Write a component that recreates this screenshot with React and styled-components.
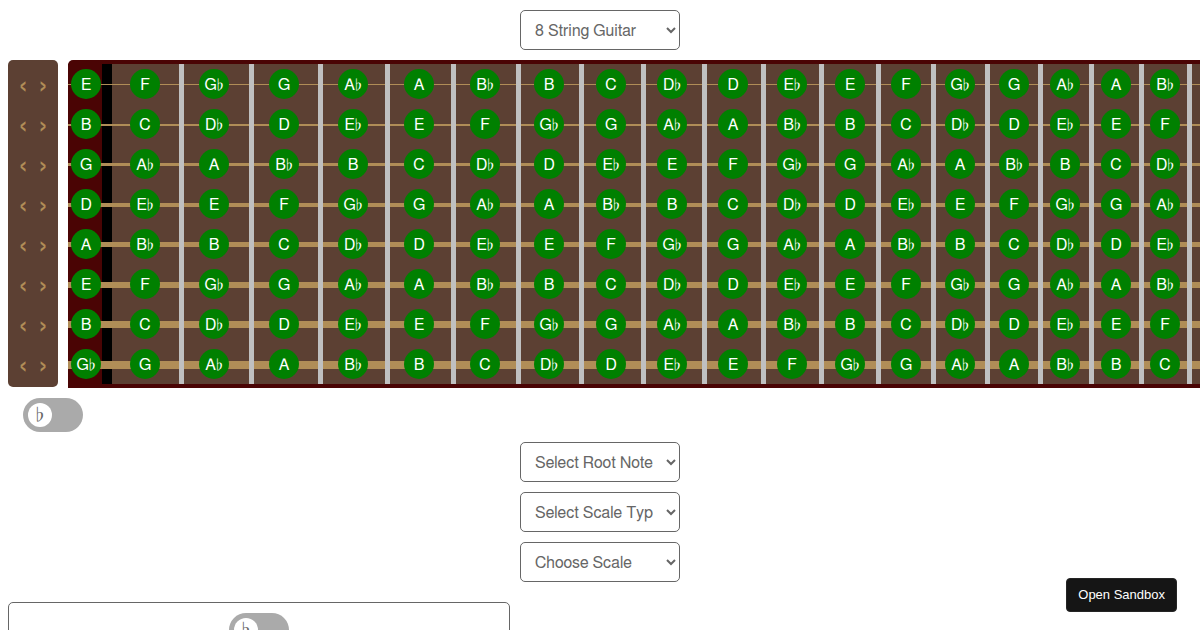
import React, { useState } from 'react';
import styled, { createGlobalStyle } from 'styled-components';

const GlobalStyle = createGlobalStyle`
  body {
    margin: 0;
    background: white;
    font-family: FreeSans, 'Liberation Sans', Arial, sans-serif;
    font-size: 16px;
  }
  * {
    box-sizing: border-box;
  }
`;

const NOTES = ['A', 'B♭', 'B', 'C', 'D♭', 'D', 'E♭', 'E', 'F', 'G♭', 'G', 'A♭'];
const SHARPS = ['A', 'A♯', 'B', 'C', 'C♯', 'D', 'D♯', 'E', 'F', 'F♯', 'G', 'G♯'];

const TUNING = ['E', 'B', 'G', 'D', 'A', 'E', 'B', 'G♭'];

// each fret is a little narrower than the one before it
const FRETS = [67, 70, 69, 67, 66, 65, 63, 62, 61, 59, 58, 57, 55, 54, 53, 51, 50, 48, 47, 46];

// distance from one note marker to the next, open string first
const NOTE_STEPS = [59, 69, 70, 69, 66, 66, 64, 62, 61, 61, 59, 58, 56, 54, 54, 51, 51, 49, 49];

const Page = styled.main`
  display: flex;
  flex-direction: column;
  padding: 10px 8px 8px;
`;

const Select = styled.select`
  align-self: center;
  width: 160px;
  height: 40px;
  margin-bottom: 10px;
  padding: 2px 10px 0;
  border: 1px solid #666;
  border-radius: 5px;
  background: white;
  color: #666;
  font-family: inherit;
  font-size: 16px;
  font-kerning: none;
`;

const Instrument = styled.section`
  display: flex;
  align-items: flex-start;
  gap: 10px;
`;

const Tuner = styled.div`
  flex: none;
  width: 50px;
  padding: 4px 0 3px;
  border-radius: 5px;
  background: #5c4033;
`;

const TunerRow = styled.div`
  display: flex;
  justify-content: center;
  height: 40px;
`;

const TunerButton = styled.button`
  width: 20px;
  padding: 2px 0 0;
  border: none;
  background: none;
  color: #b08d57;
  font-family: inherit;
  font-size: 32px;
  line-height: 36px;
  cursor: pointer;
`;

const Board = styled.div`
  flex: none;
  display: grid;
  border: solid #4a0404;
  border-width: 4px 0;
  border-radius: 5px 0 0 0;
  background: #5c4033;
`;

const Layer = styled.div`
  grid-area: 1 / 1;
`;

const Nut = styled(Layer)`
  width: 44px;
  border-right: 10px solid black;
  background: #4a0404;
`;

const StringRow = styled.div`
  display: flex;
  align-items: center;
  height: 40px;
  padding-top: 1px;
`;

const StringLine = styled.div`
  flex: 1;
  height: ${({ $gauge }) => $gauge}px;
  background: #b08d57;
`;

const FretLayer = styled(Layer)`
  display: flex;
  padding-left: 44px;
`;

const Fret = styled.div`
  flex: none;
  width: ${({ $width }) => $width}px;

  & + & {
    border-left: 5px solid silver;
  }
`;

const NoteRow = styled.div`
  display: flex;
  align-items: center;
  height: 40px;
  padding-left: 3px;
`;

const NoteCell = styled.div`
  flex: none;
  width: ${({ $width }) => $width}px;
`;

const Note = styled.div`
  width: 30px;
  height: 30px;
  border-radius: 50%;
  background: green;
  color: white;
  line-height: 32px;
  text-align: center;
`;

const Switch = styled.label`
  position: relative;
  display: block;
  width: 60px;
  height: 34px;
  padding: 5px;
  border-radius: 17px;
  background: #aaa;
  cursor: pointer;

  input {
    position: absolute;
    inset: 0;
    margin: 0;
    opacity: 0;
  }
`;

const Knob = styled.span`
  display: block;
  width: 24px;
  height: 24px;
  margin-left: ${({ $on }) => ($on ? 26 : 0)}px;
  border-radius: 50%;
  background: white;
  color: #666;
  font-size: 20px;
  line-height: 24px;
  text-align: center;
`;

const BoardOptions = styled.div`
  padding: 10px 15px;
`;

const Card = styled.section`
  display: flex;
  flex-direction: column;
  align-items: center;
  width: 502px;
  max-width: 100%;
  margin-top: 10px;
  padding: 10px;
  border: 1px solid #666;
  border-radius: 5px;
`;

const SandboxButton = styled.button`
  position: fixed;
  right: 23px;
  bottom: 18px;
  height: 34px;
  padding: 0 11px 2px;
  border: 1px solid #252525;
  border-radius: 4px;
  background: #151515;
  color: white;
  font-family: 'Liberation Sans', Arial, sans-serif;
  font-size: 13px;
  cursor: pointer;
`;

function noteAt(open, fret, sharp) {
  const index = (NOTES.indexOf(open) + fret) % 12;
  return sharp ? SHARPS[index] : NOTES[index];
}

function AccidentalSwitch({ sharp, onChange }) {
  return (
    <Switch>
      <input
        type="checkbox"
        aria-label="Use sharps"
        checked={sharp}
        onChange={(e) => onChange(e.target.checked)}
      />
      <Knob $on={sharp}>{sharp ? '♯' : '♭'}</Knob>
    </Switch>
  );
}

function Fretboard({ tuning, sharp }) {
  return (
    <Board>
      <Nut />
      <Layer>
        {tuning.map((open, i) => (
          <StringRow key={i}>
            <StringLine $gauge={i + 1} />
          </StringRow>
        ))}
      </Layer>
      <FretLayer>
        {FRETS.map((width, i) => (
          <Fret key={i} $width={width} />
        ))}
      </FretLayer>
      <Layer>
        {tuning.map((open, i) => (
          <NoteRow key={i}>
            {NOTE_STEPS.map((width, fret) => (
              <NoteCell key={fret} $width={width}>
                <Note>{noteAt(open, fret, sharp)}</Note>
              </NoteCell>
            ))}
          </NoteRow>
        ))}
      </Layer>
    </Board>
  );
}

export default function App() {
  const [tuning, setTuning] = useState(TUNING);
  const [sharp, setSharp] = useState(false);
  const [cardSharp, setCardSharp] = useState(false);

  const retune = (string, step) => {
    setTuning(tuning.map((open, i) => (i === string ? noteAt(open, step + 12, false) : open)));
  };

  return (
    <Page>
      <GlobalStyle />
      <Select aria-label="Instrument">
        <option>8 String Guitar</option>
      </Select>
      <Instrument>
        <Tuner>
          {tuning.map((open, i) => (
            <TunerRow key={i}>
              <TunerButton aria-label="Tune down" onClick={() => retune(i, -1)}>‹</TunerButton>
              <TunerButton aria-label="Tune up" onClick={() => retune(i, 1)}>›</TunerButton>
            </TunerRow>
          ))}
        </Tuner>
        <Fretboard tuning={tuning} sharp={sharp} />
      </Instrument>
      <BoardOptions>
        <AccidentalSwitch sharp={sharp} onChange={setSharp} />
      </BoardOptions>
      <Select aria-label="Root note">
        <option>Select Root Note</option>
      </Select>
      <Select aria-label="Scale type">
        <option>Select Scale Type</option>
      </Select>
      <Select aria-label="Scale">
        <option>Choose Scale</option>
      </Select>
      <Card>
        <AccidentalSwitch sharp={cardSharp} onChange={setCardSharp} />
      </Card>
      <SandboxButton>Open Sandbox</SandboxButton>
    </Page>
  );
}
